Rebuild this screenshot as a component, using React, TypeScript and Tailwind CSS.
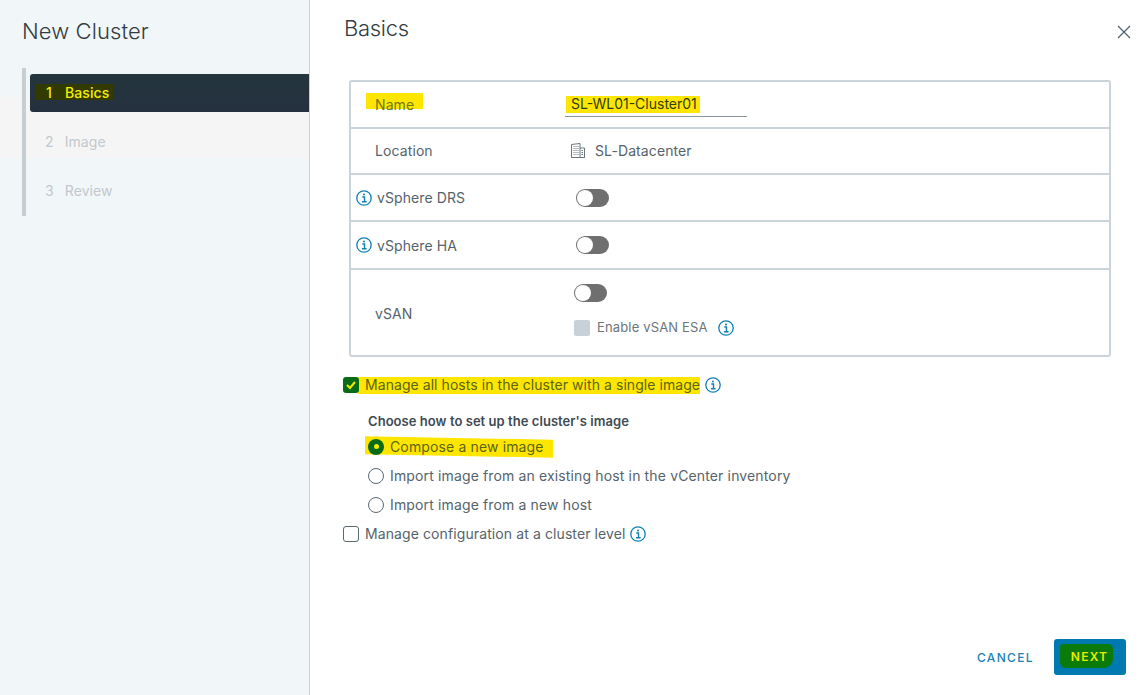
function InfoIcon({ className = '' }: { className?: string }) {
    return (
        <svg viewBox="0 0 16 16" className={'w-4 h-4 shrink-0 ' + className} fill="none">
            <circle cx="8" cy="8" r="7.2" stroke="#0f7fb5" strokeWidth="1.3" />
            <circle cx="8" cy="4.6" r="1" fill="#0f7fb5" />
            <path d="M6.3 7h2.2v4.6M6 11.8h4.6" stroke="#0f7fb5" strokeWidth="1.4" />
        </svg>
    );
}

function BuildingIcon() {
    return (
        <svg viewBox="0 0 14 15" className="w-[14px] h-[15px] shrink-0" fill="none" stroke="#6b767c" strokeWidth="1">
            <path d="M.5 14.5V1.5l8.5-1v14zM9 5h4.5v9.5H9M.5 14.5H13.5" />
            <path d="M2.5 3.5h5M2.5 5.5h5M2.5 7.5h5M2.5 9.5h5M2.5 11.5h5" strokeDasharray="1 1" />
            <path d="M10.5 7.5h1.5M10.5 9.5h1.5M10.5 11.5h1.5" />
        </svg>
    );
}

function Toggle() {
    return (
        <div className="w-[33px] h-[18px] rounded-full bg-[#6f6f6f] relative shrink-0">
            <div className="absolute left-[1px] top-[1px] w-4 h-4 rounded-full bg-white" />
        </div>
    );
}

function Radio({ label }: { label: string }) {
    return (
        <div className="h-[29px] flex items-center gap-[6px]">
            <div className="w-4 h-4 rounded-full border border-[#5a6870] bg-white shrink-0" />
            <span className="tracking-[0.14px]">{label}</span>
        </div>
    );
}

export default function App() {
    return (
        <div className="w-[1148px] h-[695px] flex bg-white overflow-hidden text-[14px] tracking-[0.1px] text-[#56636b] font-['Inter','Liberation_Sans',sans-serif]">
            <aside className="w-[310px] shrink-0 bg-[#f1f6f9] border-r border-[#c4d0d6] relative">
                <h1 className="text-[22px] font-light text-[#333c42] ml-[22px] mt-[17px] leading-[28px]">New Cluster</h1>
                <div className="absolute left-0 right-0 top-[97px] h-[61px] bg-[#f5f5f5]" />
                <div className="relative ml-[22px] mt-[23px] h-[148px] border-l-[4px] border-[#c9ced2] pt-[6px] pl-[4px]">
                    <div className="h-[38px] bg-gradient-to-b from-[#23353d] to-[#25303f] rounded-l-[3px] flex items-center pl-[6px]">
                        <div className="h-[16px] mb-[2px] w-[77px] bg-[#333a00] flex items-center pl-[10px] gap-[13px] text-[#f4f000] text-[14px] font-medium">
                            <span>1</span>
                            <span>Basics</span>
                        </div>
                    </div>
                    <div className="h-[49px] pt-[10px] flex items-center pl-[15px] gap-[11px] text-[#c3c8cc]">
                        <span>2</span>
                        <span>Image</span>
                    </div>
                    <div className="h-[49px] pt-[10px] flex items-center pl-[15px] gap-[11px] text-[#c3c8cc]">
                        <span>3</span>
                        <span>Review</span>
                    </div>
                </div>
            </aside>

            <main className="flex-1 relative pl-[34px] pr-[22px]">
                <div className="h-[80px] flex items-start justify-between">
                    <h2 className="text-[22px] font-light tracking-[-0.3px] text-[#333c42] mt-[14px] leading-[28px]">Basics</h2>
                    <svg viewBox="0 0 14 14" className="w-[14px] h-[14px] mt-[25px] -mr-[5px]" stroke="#4a626e" strokeWidth="1.2">
                        <path d="M1 1l12 12M13 1L1 13" />
                    </svg>
                </div>

                <div className="ml-[5px] w-[762px] border-2 border-[#cbd4d9] rounded-[3px]">
                    <div className="h-[47px] border-b-2 border-[#cbd4d9] flex items-center pl-[24px]">
                        <span className="w-[190px] relative">
                            <span className="absolute -left-[9px] -top-[1px] w-[57px] h-[16px] bg-[#ffe600]" />
                            <span className="relative text-[#6d7a10]">Name</span>
                        </span>
                        <div className="w-[182px] h-[25px] border-b border-[#8a9499] relative">
                            <span className="absolute left-[1px] top-[4px] w-[134px] h-[17px] bg-[#ffe600]" />
                            <span className="relative block pl-[6px] text-[#2f3d12] leading-[24px] tracking-[0px]">SL-WL01-Cluster01</span>
                        </div>
                    </div>
                    <div className="h-[46px] pb-[1px] border-b-2 border-[#cbd4d9] flex items-center pl-[24px]">
                        <span className="w-[196px]">Location</span>
                        <BuildingIcon />
                        <span className="ml-[10px]">SL-Datacenter</span>
                    </div>
                    <div className="h-[47px] border-b-2 border-[#cbd4d9] flex items-center pl-[5px]">
                        <InfoIcon />
                        <span className="ml-[5px] w-[199px]">vSphere DRS</span>
                        <Toggle />
                    </div>
                    <div className="h-[48px] border-b-2 border-[#cbd4d9] flex items-center pl-[5px]">
                        <InfoIcon />
                        <span className="ml-[5px] w-[199px]">vSphere HA</span>
                        <Toggle />
                    </div>
                    <div className="h-[85px] flex items-center pl-[24px]">
                        <span className="w-[199px] mt-[2px]">vSAN</span>
                        <div className="flex flex-col gap-[16px] -mt-[3px]">
                            <Toggle />
                            <div className="flex items-center">
                                <div className="w-4 h-4 rounded-[2px] bg-[#c8d1d7]" />
                                <span className="ml-[7px] text-[13px] tracking-[0.15px] text-[#6b757b]">Enable vSAN ESA</span>
                                <InfoIcon className="ml-[10px]" />
                            </div>
                        </div>
                    </div>
                </div>

                <div className="mt-[18px] h-[20px] flex items-center relative -ml-[1px]">
                    <div className="w-4 h-4 rounded-[3px] bg-[#0a6b16] flex items-center justify-center shrink-0 relative z-10">
                        <svg viewBox="0 0 12 12" className="w-3 h-3" fill="none" stroke="#f2ec00" strokeWidth="2">
                            <path d="M2 6l3 3 5-6" />
                        </svg>
                    </div>
                    <div className="relative -ml-[1px] h-[17px] pb-[1px] bg-[#ffe600] flex items-center pl-[7px] w-[342px] text-[#5a6412]">
                        <span className="whitespace-nowrap tracking-[0.06px]">Manage all hosts in the cluster with a single image</span>
                    </div>
                    <InfoIcon className="ml-[5px]" />
                </div>

                <div className="ml-[24px] mt-[16px] text-[13px] font-semibold tracking-[0.05px] text-[#3f4a52] leading-[20px]">Choose how to set up the cluster's image</div>
                <div className="ml-[24px] mt-[1px]">
                    <div className="h-[29px] flex items-center relative">
                        <div className="absolute -left-[3px] top-[6px] w-[188px] h-[18px] bg-[#ffe600] skew-y-[1deg]" />
                        <div className="relative flex items-center gap-[6px] text-[#5a6412]">
                            <div className="w-4 h-4 rounded-full bg-[#0a6b16] flex items-center justify-center shrink-0">
                                <div className="w-[5px] h-[5px] rounded-full bg-[#f2ec00]" />
                            </div>
                            <span className="tracking-[0.14px]">Compose a new image</span>
                        </div>
                    </div>
                    <Radio label="Import image from an existing host in the vCenter inventory" />
                    <Radio label="Import image from a new host" />
                </div>
                <div className="h-[29px] flex items-center -ml-[1px]">
                    <div className="w-4 h-4 rounded-[3px] border border-[#5a6870] bg-white shrink-0" />
                    <span className="ml-[6px]">Manage configuration at a cluster level</span>
                    <InfoIcon className="ml-[4px]" />
                </div>

                <div className="absolute right-[22px] bottom-[20px] flex items-center gap-[20px]">
                    <span className="text-[12px] tracking-[1.35px] font-medium text-[#1c82b4] pt-[2px]">CANCEL</span>
                    <div className="w-[72px] h-[36px] bg-[#0079b0] rounded-[3px] flex items-start pl-[6px] pt-[5px]">
                        <div className="w-[53px] h-[24px] bg-[#0a7a0a] rounded-tl-[3px] rounded-tr-[5px] rounded-br-[9px] rounded-bl-[6px] flex items-center justify-center pl-[6px] pt-[1px] text-[12px] tracking-[1.2px] font-semibold text-[#e8ec00]">NEXT</div>
                    </div>
                </div>
            </main>
        </div>
    );
}
